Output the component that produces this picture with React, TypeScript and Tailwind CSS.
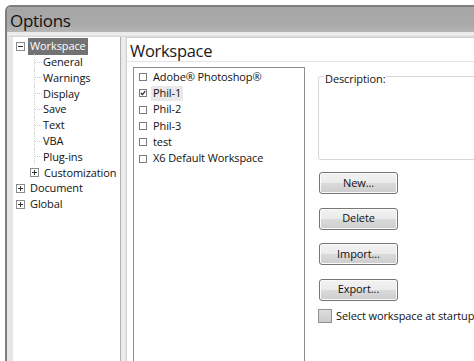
import React from "react";

const font = { fontFamily: '"Open Sans", "Noto Sans", sans-serif' };

function Box({ minus }: { minus?: boolean }) {
  return (
    <div className="w-[9px] h-[9px] border border-[#8c8c8c] bg-white flex items-center justify-center shrink-0">
      <svg width="7" height="7" viewBox="0 0 7 7">
        <line x1="1" y1="3.5" x2="6" y2="3.5" stroke="#333" strokeWidth="1" />
        {!minus && <line x1="3.5" y1="1" x2="3.5" y2="6" stroke="#333" strokeWidth="1" />}
      </svg>
    </div>
  );
}

function ChildRow({ label }: { label: string }) {
  return (
    <div className="h-[15.8px] flex items-stretch">
      <div className="w-[21px] shrink-0" />
      <div className="w-[8px] shrink-0 border-l border-dotted border-[#d0d0d0] flex items-center">
        <div className="w-full border-t border-dotted border-[#d0d0d0]" />
      </div>
      <div className="flex items-center pl-[1px]">{label}</div>
    </div>
  );
}

function ListItem({ label, checked, selected }: { label: string; checked?: boolean; selected?: boolean }) {
  return (
    <div className="h-[16.3px] flex items-center pl-[5px]">
      <div className="w-[8px] h-[8px] border border-[#7d7d7d] bg-white flex items-center justify-center shrink-0">
        {checked && (
          <svg width="6" height="6" viewBox="0 0 6 6">
            <path d="M0.8 3 L2.4 4.6 L5.3 1.2" stroke="#222" strokeWidth="1.2" fill="none" />
          </svg>
        )}
      </div>
      <div className={"ml-[4px] px-[2px] h-[15px] flex items-center " + (selected ? "bg-[#e9e9e9]" : "")}>{label}</div>
    </div>
  );
}

function Btn({ label }: { label: string }) {
  return (
    <div className="w-[79px] h-[22px] rounded-[3px] border border-[#767676] bg-[linear-gradient(to_bottom,#f2f2f2_0%,#ebebeb_48%,#dadada_52%,#cdcdcd_100%)] flex items-center justify-center text-[#111] shadow-[inset_0_0_0_1px_#fbfbfb]">
      {label}
    </div>
  );
}

export default function App() {
  return (
    <div
      className="w-[474px] h-[361px] overflow-hidden bg-white pl-[5px] pt-[5px] text-[11px] tracking-[-0.1px] text-[#111]"
      style={font}
    >
      <div className="h-[360px] w-[480px] flex flex-col border-l-2 border-t-2 border-[#7e7e7e] rounded-tl-[6px] bg-[#e6e6e6] overflow-hidden">
        <div className="h-[25px] shrink-0 bg-[linear-gradient(to_bottom,#a6a6a6_0%,#a9a9a9_70%,#b6b6b6_100%)] pl-[3px] flex items-end">
          <span className="text-[17px] leading-[22px] tracking-[-0.3px] text-[#111]">Options</span>
        </div>
        <div className="h-[5px] shrink-0 bg-[linear-gradient(to_bottom,#e9e9e9_0%,#eeeeee_50%,#d4d4d4_100%)]" />
        <div className="flex flex-1 pl-[6px]">
          <div className="w-[108px] shrink-0 bg-white border-r border-[#b4b4b4] pt-[1.5px]">
            <div className="h-[15.8px] flex items-center">
              <div className="w-[3px] shrink-0" />
              <Box minus />
              <div className="ml-[3px] px-[2px] h-[17px] bg-[#727272] text-white flex items-center">Workspace</div>
            </div>
            {["General", "Warnings", "Display", "Save", "Text", "VBA", "Plug-ins"].map((l) => (
              <ChildRow key={l} label={l} />
            ))}
            <div className="h-[15.8px] flex items-center">
              <div className="w-[17px] shrink-0" />
              <Box />
              <div className="ml-[5px]">Customization</div>
            </div>
            {["Document", "Global"].map((l) => (
              <div key={l} className="h-[15.8px] flex items-center">
                <div className="w-[3px] shrink-0" />
                <Box />
                <div className="ml-[5px]">{l}</div>
              </div>
            ))}
          </div>
          <div className="w-[5px] shrink-0 bg-[linear-gradient(to_right,#e2e2e2,#f0f0f0,#e2e2e2)]" />
          <div className="flex-1 bg-white border-l border-t border-[#d2d2d2] flex flex-col">
            <div className="h-[24px] shrink-0 border-b border-[#e4e4e4] pl-[3px] pt-[1.5px]">
              <span className="text-[16.5px] leading-[22px] tracking-[-0.3px] text-[#1a1a1a]">Workspace</span>
            </div>
            <div className="flex flex-1">
              <div className="ml-[6px] mt-[5px] w-[172px] shrink-0 border border-[#8e8e8e] bg-white pt-[1px]">
                <ListItem label="Adobe® Photoshop®" />
                <ListItem label="Phil-1" checked selected />
                <ListItem label="Phil-2" />
                <ListItem label="Phil-3" />
                <ListItem label="test" />
                <ListItem label="X6 Default Workspace" />
              </div>
              <div className="ml-[13px] w-[182px] shrink-0 flex flex-col">
                <fieldset className="mt-[3.5px] h-[94.5px] border border-[#d6d6d6] rounded-[3px]">
                  <legend className="ml-[5px] px-[1px] pt-[5px] leading-[16px]">Description:</legend>
                </fieldset>
                <div className="mt-[12px] ml-[1px] flex flex-col gap-[13.5px]">
                  <Btn label="New..." />
                  <Btn label="Delete" />
                  <Btn label="Import..." />
                  <Btn label="Export..." />
                </div>
                <div className="mt-[7px] flex items-center">
                  <div className="w-[14px] h-[14px] border border-[#8f8f8f] bg-[linear-gradient(to_bottom,#dedede,#cbcbcb)] shrink-0" />
                  <div className="ml-[4px] whitespace-nowrap">Select workspace at startup</div>
                </div>
              </div>
            </div>
          </div>
        </div>
      </div>
    </div>
  );
}
